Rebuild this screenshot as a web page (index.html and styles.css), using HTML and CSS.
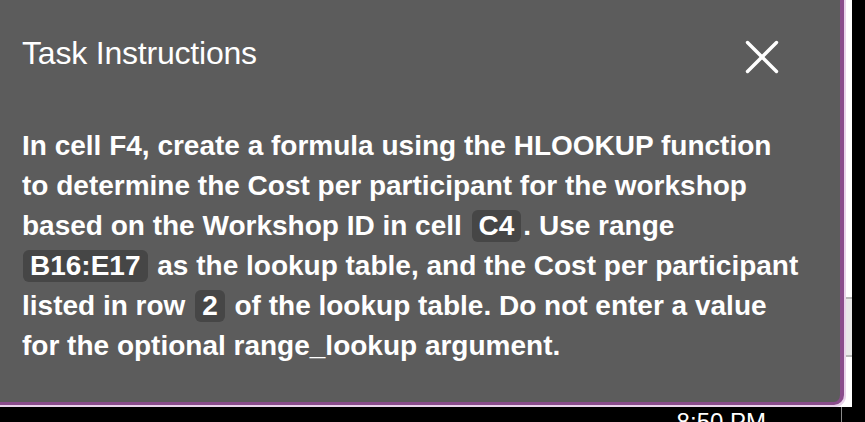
FILE: index.html
```html
<!DOCTYPE html>
<html>
<head>
<meta charset="utf-8">
<link rel="stylesheet" href="styles.css">
</head>
<body>
<div class="screen">
  <div class="frame">
    <div class="panel">
      <div class="header">
        <div class="title">Task Instructions</div>
        <svg class="close" viewBox="0 0 34 34" width="34" height="34">
          <line x1="2.5" y1="2.5" x2="31.5" y2="31.5" stroke="#fff" stroke-width="3.4" stroke-linecap="round"/>
          <line x1="31.5" y1="2.5" x2="2.5" y2="31.5" stroke="#fff" stroke-width="3.4" stroke-linecap="round"/>
        </svg>
      </div>
      <p class="body">In cell F4, create a formula using the HLOOKUP function<br>to determine the Cost per participant for the workshop<br>based on the Workshop ID in cell <span class="chip">C4</span>. Use range<br><span class="chip first">B16:E17</span> as the lookup table, and the Cost per participant<br>listed in row <span class="chip">2</span> of the lookup table. Do not enter a value<br>for the optional range_lookup argument.</p>
    </div>
    <div class="scroll">
      <div class="thumb"></div>
    </div>
  </div>
  <div class="taskbar">
    <div class="clock">8:50 PM</div>
    <div class="sep"></div>
  </div>
</div>
</body>
</html>
```
FILE: styles.css
```css
html, body {
  margin: 0;
  padding: 0;
  background: #000;
}
body {
  width: 865px;
  height: 422px;
  overflow: hidden;
  font-family: "Liberation Sans", Arial, sans-serif;
}
.screen {
  width: 865px;
  height: 422px;
}
.frame {
  display: flex;
  width: 852px;
  height: 407px;
  background: #fff;
}
.panel {
  width: 840px;
  height: 402px;
  flex: none;
  box-sizing: content-box;
  background: #5c5c5c;
  border-right: 4px solid #8a4d8c;
  border-bottom: 3px solid #8a4d8c;
  border-bottom-right-radius: 10px;
  box-shadow: 1px 1px 0 1px #ead4eb;
  padding: 0;
  color: #fff;
}
.header {
  display: flex;
  justify-content: space-between;
  align-items: flex-start;
  padding: 35px 61px 0 22px;
}
.title {
  font-size: 32px;
  line-height: 36px;
  font-weight: normal;
  letter-spacing: -0.2px;
}
.close {
  margin-top: 5px;
  display: block;
}
.body {
  margin: 52px 0 0 22px;
  font-size: 28px;
  line-height: 40px;
  font-weight: bold;
  white-space: nowrap;
}
.chip {
  display: inline-block;
  line-height: 32px;
  padding: 0 7px;
  margin: 0 2px;
  background: #464646;
  border-radius: 6px;
}
.chip.first {
  margin-left: 1px;
}
.scroll {
  flex: 1;
  margin-left: 2px;
  display: flex;
  flex-direction: column;
  padding-top: 297px;
}
.thumb {
  height: 56px;
  background: #e9e9e9;
  border-top: 2px solid #b9b9b9;
  border-bottom: 2px solid #b9b9b9;
}
.taskbar {
  display: flex;
  justify-content: flex-end;
  align-items: flex-start;
  height: 15px;
  overflow: hidden;
  padding-right: 23px;
}
.clock {
  color: #fff;
  font-size: 24px;
  line-height: 24px;
  padding-top: 3px;
  margin-right: 75px;
}
.sep {
  width: 1px;
  height: 15px;
  background: #8a8a8a;
}
```
